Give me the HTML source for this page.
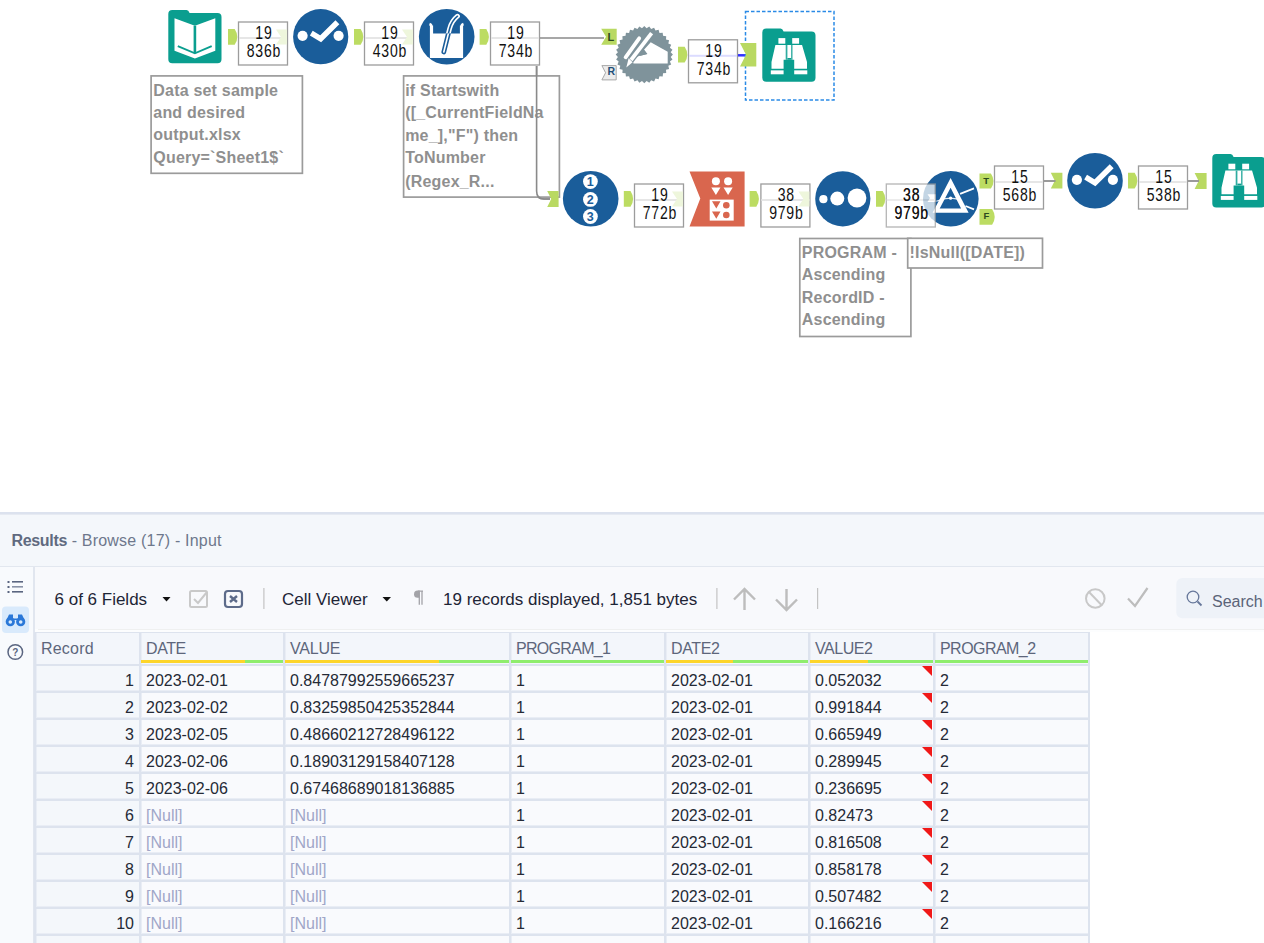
<!DOCTYPE html>
<html><head><meta charset="utf-8"><style>
*{margin:0;padding:0;box-sizing:border-box}
html,body{width:1264px;height:943px;overflow:hidden;background:#fff;font-family:"Liberation Sans", sans-serif}
.cv{position:absolute;left:0;top:0}
.cb{font-family:"Liberation Sans",sans-serif;font-size:18px;fill:#111;letter-spacing:1px}
.an{font-family:"Liberation Sans",sans-serif;font-size:16px;font-weight:bold;fill:#8f8f8f;letter-spacing:0.2px}
.anc{font-family:"Liberation Sans",sans-serif;font-size:9px;font-weight:bold;fill:#3d6b2a}
.rid{font-family:"Liberation Sans",sans-serif;font-size:10px;font-weight:bold;fill:#1a5d9a}
.abs{position:absolute}
.hc{position:absolute;top:633px;height:31px;background:#f3f6fb;box-shadow:inset 1px 0 0 #e9edf5}
.ht{position:absolute;top:638.5px;font-size:16px;line-height:20px;color:#5d667b;white-space:nowrap}
.bar{position:absolute;top:660px;height:3px}
.dc{position:absolute;height:25px;box-shadow:inset 1px -1px 0 #e9edf5}
.dt{position:absolute;font-size:16px;line-height:25px;height:25px;padding-top:2px;color:#252a36;white-space:nowrap}
.nul{color:#a0a6c8}
.red{position:absolute;width:10px;height:10px;background:#f01818;clip-path:polygon(0 0,100% 0,100% 100%)}
.tb{position:absolute;white-space:nowrap;font-size:17px;line-height:20px;color:#1e2536}
</style></head><body>
<svg class="cv" width="1264" height="512" viewBox="0 0 1264 512"><g transform="translate(168,9.5)"><path d="M0.3 4.4 Q0.3 0.4 4.3 0.4 H18.5 Q20.5 0.4 21.6 3.4 H49.5 Q53.5 3.4 53.5 7.4 V49.7 Q53.5 53.7 49.5 53.7 H4.3 Q0.3 53.7 0.3 49.7 Z" fill="#0a9e8f"/><path d="M6.5 8.7 L26.9 16.2 L47.3 8.7 V41.2 L26.9 49.1 L6.5 41.2 Z" fill="#fff"/><path d="M26.9 16.2 V43.8" stroke="#0a9e8f" stroke-width="2.6"/><path d="M9.8 36.6 L26.9 43.8 L43.7 36.6" stroke="#0a9e8f" stroke-width="1.9" fill="none"/></g><path d="M228 29 H234.70 Q239.90 36.90 234.70 44.8 H228 Z" fill="#bcdc62"/><g transform="translate(238,21.5)"><rect x="0.5" y="0.5" width="49" height="43" fill="#fff" stroke="#9c9c9c" stroke-width="1.3"/><rect x="1" y="15.5" width="48" height="2" fill="#e6e6e6"/><path d="M38 8 L49 8 L49 23 L38 23 L43 15.5 Z" fill="#eef6dc"/><text transform="translate(25.9,17.3) scale(0.78,1)" text-anchor="middle" class="cb">19</text><text transform="translate(25.9,35.7) scale(0.78,1)" text-anchor="middle" class="cb">836b</text></g><circle cx="320.7" cy="36.7" r="27.6" fill="#1a5d9a"/><circle cx="302.6" cy="35.8" r="5.1" fill="#fff"/><circle cx="338.6" cy="35.8" r="5.1" fill="#fff"/><path d="M311.3 33.2 L320.7 38.8 L337.4 22.3" stroke="#fff" stroke-width="5.5" fill="none" stroke-linecap="butt" stroke-linejoin="miter"/><path d="M354 29 H360.70 Q365.90 36.90 360.70 44.8 H354 Z" fill="#bcdc62"/><g transform="translate(364,21.5)"><rect x="0.5" y="0.5" width="49" height="43" fill="#fff" stroke="#9c9c9c" stroke-width="1.3"/><rect x="1" y="15.5" width="48" height="2" fill="#e6e6e6"/><path d="M38 8 L49 8 L49 23 L38 23 L43 15.5 Z" fill="#eef6dc"/><text transform="translate(25.9,17.3) scale(0.78,1)" text-anchor="middle" class="cb">19</text><text transform="translate(25.9,35.7) scale(0.78,1)" text-anchor="middle" class="cb">430b</text></g><circle cx="446.7" cy="36.7" r="27.8" fill="#1a5d9a"/><path d="M431.5 25.5 V56.3 H461.5 V25.5" stroke="#fff" stroke-width="3.2" fill="none"/><path d="M431.5 26 Q431 24.5 429.5 24" stroke="#fff" stroke-width="2.6" fill="none"/><path d="M461.5 26 Q462 24.5 463.5 24" stroke="#fff" stroke-width="2.6" fill="none"/><rect x="431.5" y="33.5" width="30" height="22.8" fill="#fff"/><clipPath id="aw"><rect x="400" y="0" width="100" height="33.5"/></clipPath><clipPath id="bw"><rect x="400" y="33.5" width="100" height="40"/></clipPath><g clip-path="url(#aw)"><path d="M443.8 52 L449.5 29 Q451.5 21 457.5 16.2" stroke="#fff" stroke-width="4.8" fill="none" stroke-linecap="round"/><path d="M443.8 52 L449.5 29 Q451.5 21 457.5 16.2" stroke="#1a5d9a" stroke-width="1.5" fill="none" stroke-linecap="round"/></g><g clip-path="url(#bw)"><path d="M443.8 52 L449.5 29 Q451.5 21 457.5 16.2" stroke="#1a5d9a" stroke-width="4.8" fill="none" stroke-linecap="round"/><path d="M443.8 52 L449.5 29 Q451.5 21 457.5 16.2" stroke="#fff" stroke-width="1.6" fill="none" stroke-linecap="round"/></g><path d="M479.6 29 H486.30 Q491.50 36.90 486.30 44.8 H479.6 Z" fill="#bcdc62"/><g transform="translate(490,21.5)"><rect x="0.5" y="0.5" width="49" height="43" fill="#fff" stroke="#9c9c9c" stroke-width="1.3"/><rect x="1" y="15.5" width="48" height="2" fill="#e6e6e6"/><text transform="translate(25.9,17.3) scale(0.78,1)" text-anchor="middle" class="cb">19</text><text transform="translate(25.9,35.7) scale(0.78,1)" text-anchor="middle" class="cb">734b</text></g><path d="M540 38 H604" stroke="#8a8a8a" stroke-width="1.6" fill="none"/><path d="M536.6 66 V191 Q536.6 199 544 199 H550" stroke="#8a8a8a" stroke-width="1.6" fill="none"/><polygon points="644.30,26.00 646.61,28.20 649.27,26.43 651.16,29.00 654.08,27.72 655.50,30.58 658.60,29.83 659.50,32.89 662.68,32.69 663.04,35.86 666.21,36.22 666.01,39.40 669.07,40.30 668.32,43.40 671.18,44.82 669.90,47.74 672.47,49.63 670.70,52.29 672.90,54.60 670.70,56.91 672.47,59.57 669.90,61.46 671.18,64.38 668.32,65.80 669.07,68.90 666.01,69.80 666.21,72.98 663.04,73.34 662.68,76.51 659.50,76.31 658.60,79.37 655.50,78.62 654.08,81.48 651.16,80.20 649.27,82.77 646.61,81.00 644.30,83.20 641.99,81.00 639.33,82.77 637.44,80.20 634.52,81.48 633.10,78.62 630.00,79.37 629.10,76.31 625.92,76.51 625.56,73.34 622.39,72.98 622.59,69.80 619.53,68.90 620.28,65.80 617.42,64.38 618.70,61.46 616.13,59.57 617.90,56.91 615.70,54.60 617.90,52.29 616.13,49.63 618.70,47.74 617.42,44.82 620.28,43.40 619.53,40.30 622.59,39.40 622.39,36.22 625.56,35.86 625.92,32.69 629.10,32.89 630.00,29.83 633.10,30.58 634.52,27.72 637.44,29.00 639.33,26.43 641.99,28.20" fill="#7f939b"/><path d="M633.4 58.5 L639 56 L647.3 54 L644 49.8 L650.7 42.3 L667.7 51.8 V63.4 H633.4 Z" fill="#fff"/><path d="M644 49.8 L647.3 54 L639.5 56 Z" fill="#7f939b"/><path d="M631 60 L651.6 33.2" stroke="#7f939b" stroke-width="6.4" stroke-linecap="butt"/><path d="M631 60 L651.6 33.2" stroke="#fff" stroke-width="3.8" stroke-linecap="butt"/><path d="M628.6 58.3 L632.6 62.3 L626.3 67.6 Z" fill="#fff"/><path d="M625.6 57.3 L639.2 38.3" stroke="#fff" stroke-width="3.8" stroke-linecap="round"/><path d="M601.2 28.8 H616.7 V44.7 H601.2 L606.0 36.75 Z" fill="#b9d962"/><text x="607.6" y="41" class="anc" style="font-size:11px;fill:#2c4a1e">L</text><path d="M601.9 65.6 H616.2 V79.9 H601.9 L605.6 72.75 Z" fill="#ececec" stroke="#a8a8a8" stroke-width="1"/><text x="607.4" y="75.3" class="anc" style="font-size:10.5px;fill:#1f4f78">R</text><path d="M678 46.7 H684.70 Q689.90 54.60 684.70 62.5 H678 Z" fill="#bcdc62"/><g transform="translate(688,39.3)"><rect x="0.5" y="0.5" width="49" height="43" fill="#fff" stroke="#9c9c9c" stroke-width="1.3"/><rect x="1" y="15.5" width="48" height="2" fill="#dcdcff"/><text transform="translate(25.9,17.3) scale(0.78,1)" text-anchor="middle" class="cb">19</text><text transform="translate(25.9,35.7) scale(0.78,1)" text-anchor="middle" class="cb">734b</text></g><path d="M738 55.3 H745" stroke="#3333ff" stroke-width="2.5"/><rect x="745.5" y="11.5" width="88.5" height="88.5" fill="none" stroke="#2a8ae6" stroke-width="1.5" stroke-dasharray="3.5 2"/><path d="M740 43 H756.3 V66.5 H740 L746 54.75 Z" fill="#b9d962"/><g transform="translate(762,28.1)"><path d="M0.3 4.4 Q0.3 0.4 4.3 0.4 H18.5 Q20.5 0.4 21.6 3.4 H49.5 Q53.5 3.4 53.5 7.4 V49.7 Q53.5 53.7 49.5 53.7 H4.3 Q0.3 53.7 0.3 49.7 Z" fill="#0a9e8f"/><rect x="16.4" y="10" width="6.9" height="5.6" fill="#fff"/><rect x="30.2" y="10" width="6.9" height="5.6" fill="#fff"/><path d="M13.4 16.9 H40.05 L45 34 V40.6 H32.2 V31.7 H21.6 V40.6 H9.5 V34 Z" fill="#fff"/><rect x="23.7" y="16.9" width="1.7" height="14.8" fill="#0a9e8f" opacity="0.85"/><rect x="29.1" y="16.9" width="1.4" height="14.8" fill="#0a9e8f" opacity="0.85"/><rect x="25.4" y="29.9" width="3.7" height="1.8" fill="#0a9e8f"/><rect x="8.8" y="42.25" width="12.8" height="3.95" fill="#fff"/><rect x="32.2" y="42.25" width="13.1" height="3.95" fill="#fff"/></g><rect x="151.1" y="75.9" width="151.3" height="97.4" fill="#fff" stroke="#9b9b9b" stroke-width="1.7"/><text x="153.3" y="95.6" class="an">Data set sample</text><text x="153.3" y="117.9" class="an">and desired</text><text x="153.3" y="140.2" class="an">output.xlsx</text><text x="153.3" y="162.5" class="an">Query=`Sheet1$`</text><rect x="403.6" y="75.9" width="155.8" height="121.2" fill="#fff" stroke="#9b9b9b" stroke-width="1.7"/><text x="405.2" y="96.0" class="an">if Startswith</text><text x="405.2" y="118.3" class="an">([_CurrentFieldNa</text><text x="405.2" y="140.6" class="an">me_],"F") then</text><text x="405.2" y="162.9" class="an">ToNumber</text><text x="405.2" y="187.0" class="an">(Regex_R...</text><path d="M536.6 66 V191 Q536.6 199 544 199 H550" stroke="#8a8a8a" stroke-width="1.6" fill="none"/><path d="M547.2 191 H558.6 V207 H547.2 L551.2 199.0 Z" fill="#b9d962"/><circle cx="590.7" cy="198.7" r="27.8" fill="#1a5d9a"/><circle cx="590.4" cy="181.6" r="7.4" fill="#fff"/><text x="590.3" y="186.1" text-anchor="middle" class="rid" style="font-size:12.5px">1</text><circle cx="590.4" cy="199.4" r="7.4" fill="#fff"/><text x="590.3" y="203.9" text-anchor="middle" class="rid" style="font-size:12.5px">2</text><circle cx="590.4" cy="216.5" r="7.4" fill="#fff"/><text x="590.3" y="221.0" text-anchor="middle" class="rid" style="font-size:12.5px">3</text><path d="M623.8 191 H630.50 Q635.70 198.90 630.50 206.8 H623.8 Z" fill="#bcdc62"/><g transform="translate(634,183.5)"><rect x="0.5" y="0.5" width="49" height="43" fill="#fff" stroke="#9c9c9c" stroke-width="1.3"/><rect x="1" y="15.5" width="48" height="2" fill="#e6e6e6"/><path d="M38 8 L49 8 L49 23 L38 23 L43 15.5 Z" fill="#eef6dc"/><text transform="translate(25.9,17.3) scale(0.78,1)" text-anchor="middle" class="cb">19</text><text transform="translate(25.9,35.7) scale(0.78,1)" text-anchor="middle" class="cb">772b</text></g><path d="M689.5 171.4 H744.6 V226.5 H689.5 L700.3 198.6 Z" fill="#d9664e"/><circle cx="715.9" cy="181.2" r="4" fill="#fff"/><circle cx="728.1" cy="181.2" r="4" fill="#fff"/><path d="M711.3 187.4 H720.5 L715.9 195 Z M723.5 187.4 H732.7 L728.1 195 Z" fill="#fff"/><rect x="709.7" y="199.6" width="24" height="21" fill="#fff"/><path d="M712 201.2 H720.5 L716.3 208.5 Z M712 211.4 H720.5 L716.3 218.7 Z" fill="#d9664e"/><circle cx="726.3" cy="205.2" r="3.3" fill="#d9664e"/><circle cx="726.3" cy="215" r="3.3" fill="#d9664e"/><path d="M749.6 191 H756.30 Q761.50 198.90 756.30 206.8 H749.6 Z" fill="#bcdc62"/><g transform="translate(760.4,183.5)"><rect x="0.5" y="0.5" width="49" height="43" fill="#fff" stroke="#9c9c9c" stroke-width="1.3"/><rect x="1" y="15.5" width="48" height="2" fill="#e6e6e6"/><path d="M38 8 L49 8 L49 23 L38 23 L43 15.5 Z" fill="#eef6dc"/><text transform="translate(25.9,17.3) scale(0.78,1)" text-anchor="middle" class="cb">38</text><text transform="translate(25.9,35.7) scale(0.78,1)" text-anchor="middle" class="cb">979b</text></g><circle cx="842.8" cy="198.8" r="27.6" fill="#1a5d9a"/><circle cx="823.4" cy="199.2" r="4.1" fill="#fff"/><circle cx="837.3" cy="198.6" r="7" fill="#fff"/><circle cx="857" cy="198" r="9.4" fill="#fff"/><path d="M876 191 H882.70 Q887.90 198.90 882.70 206.8 H876 Z" fill="#bcdc62"/><circle cx="950.8" cy="198.7" r="27.8" fill="#1a5d9a"/><path d="M950.6 177.9 L968.6 212.8 H932.6 Z M950.6 187.7 L939.7 208.4 H961.1 Z" fill="#fff" fill-rule="evenodd"/><path d="M936.3 201.3 Q944 198.2 950.6 198.2 Q957 198.5 962 201" stroke="#fff" stroke-width="1.2" fill="none" opacity="0.85"/><circle cx="950.6" cy="198.2" r="1.6" fill="#fff"/><path d="M960.1 193.8 L974 188.4 M965.5 206 L974 209.4" stroke="#fff" stroke-width="1.8" fill="none"/><path d="M927.5 194.2 H935.7 V202 H927.5 L930 198.1 Z" fill="#fff"/><g opacity="0.74"><g transform="translate(885.8,183.5)"><rect x="0.5" y="0.5" width="49" height="43" fill="#fff" stroke="#9c9c9c" stroke-width="1.3"/><rect x="1" y="15.5" width="48" height="2" fill="#e6e6e6"/><text transform="translate(25.9,17.3) scale(0.78,1)" text-anchor="middle" class="cb">38</text><text transform="translate(25.9,35.7) scale(0.78,1)" text-anchor="middle" class="cb">979b</text></g></g><text transform="translate(911.7,200.8) scale(0.78,1)" text-anchor="middle" class="cb">38</text><text transform="translate(911.7,219.2) scale(0.78,1)" text-anchor="middle" class="cb">979b</text><path d="M979.5 173.4 H990.90 Q996.10 181.00 990.90 188.6 H979.5 Z" fill="#bcdc62"/><text x="983.2" y="184.3" class="anc" style="font-size:9.5px;fill:#2c4a1e">T</text><path d="M979.5 208.9 H992.10 Q997.30 216.80 992.10 224.70000000000002 H979.5 Z" fill="#bcdc62"/><text x="983.5" y="218.8" class="anc" style="font-size:9.5px;fill:#2c4a1e">F</text><g transform="translate(994,165.5)"><rect x="0.5" y="0.5" width="49" height="43" fill="#fff" stroke="#9c9c9c" stroke-width="1.3"/><rect x="1" y="15.5" width="48" height="2" fill="#e6e6e6"/><text transform="translate(25.9,17.3) scale(0.78,1)" text-anchor="middle" class="cb">15</text><text transform="translate(25.9,35.7) scale(0.78,1)" text-anchor="middle" class="cb">568b</text></g><path d="M1050.8 172.8 H1062.3999999999999 V188.60000000000002 H1050.8 L1054.8 180.70000000000002 Z" fill="#b9d962"/><path d="M1044 181 H1055.5" stroke="#8f8f8f" stroke-width="1.8"/><circle cx="1095" cy="180.7" r="27.8" fill="#1a5d9a"/><circle cx="1076.9" cy="179.8" r="5.1" fill="#fff"/><circle cx="1112.9" cy="179.8" r="5.1" fill="#fff"/><path d="M1085.6 177.2 L1095 182.8 L1111.7 166.3" stroke="#fff" stroke-width="5.5" fill="none"/><path d="M1128 172.8 H1134.70 Q1139.90 180.70 1134.70 188.60000000000002 H1128 Z" fill="#bcdc62"/><g transform="translate(1138,165.5)"><rect x="0.5" y="0.5" width="49" height="43" fill="#fff" stroke="#9c9c9c" stroke-width="1.3"/><rect x="1" y="15.5" width="48" height="2" fill="#e6e6e6"/><text transform="translate(25.9,17.3) scale(0.78,1)" text-anchor="middle" class="cb">15</text><text transform="translate(25.9,35.7) scale(0.78,1)" text-anchor="middle" class="cb">538b</text></g><path d="M1194.6 173 H1206.6 V189 H1194.6 L1198.6 181.0 Z" fill="#b9d962"/><path d="M1188 181 H1199" stroke="#8f8f8f" stroke-width="1.8"/><g transform="translate(1212,153.7)"><path d="M0.3 4.4 Q0.3 0.4 4.3 0.4 H18.5 Q20.5 0.4 21.6 3.4 H49.5 Q53.5 3.4 53.5 7.4 V49.7 Q53.5 53.7 49.5 53.7 H4.3 Q0.3 53.7 0.3 49.7 Z" fill="#0a9e8f"/><rect x="16.4" y="10" width="6.9" height="5.6" fill="#fff"/><rect x="30.2" y="10" width="6.9" height="5.6" fill="#fff"/><path d="M13.4 16.9 H40.05 L45 34 V40.6 H32.2 V31.7 H21.6 V40.6 H9.5 V34 Z" fill="#fff"/><rect x="23.7" y="16.9" width="1.7" height="14.8" fill="#0a9e8f" opacity="0.85"/><rect x="29.1" y="16.9" width="1.4" height="14.8" fill="#0a9e8f" opacity="0.85"/><rect x="25.4" y="29.9" width="3.7" height="1.8" fill="#0a9e8f"/><rect x="8.8" y="42.25" width="12.8" height="3.95" fill="#fff"/><rect x="32.2" y="42.25" width="13.1" height="3.95" fill="#fff"/></g><rect x="799.8" y="238.5" width="111.1" height="98.0" fill="#fff" stroke="#9b9b9b" stroke-width="1.7"/><text x="801.8" y="257.9" class="an">PROGRAM -</text><text x="801.8" y="280.2" class="an">Ascending</text><text x="801.8" y="302.5" class="an">RecordID -</text><text x="801.8" y="324.8" class="an">Ascending</text><rect x="907.7" y="238.3" width="134.8" height="29.7" fill="#fff" stroke="#9b9b9b" stroke-width="1.7"/><text x="909.5" y="257.9" class="an">!IsNull([DATE])</text></svg>
<div class="abs" style="left:0;top:512px;width:1264px;height:2px;background:#dce2ee"></div><div class="abs" style="left:0;top:514px;width:1264px;height:1px;background:#e6eaf2"></div>
<div class="abs" style="left:0;top:515px;width:1264px;height:51px;background:#f4f7fb"></div>
<div class="abs" style="left:11.5px;top:531px;font-size:16px;line-height:20px;white-space:nowrap"><b style="color:#606a80;letter-spacing:-0.33px">Results</b><span style="color:#6e778c;letter-spacing:0.2px"> - Browse (17) - Input</span></div>
<div class="abs" style="left:0;top:566px;width:1264px;height:1px;background:#e2e7ef"></div>
<div class="abs" style="left:0;top:567px;width:33px;height:376px;background:#f8fafd"></div>
<div class="abs" style="left:33px;top:567px;width:2px;height:376px;background:#e1e6ef"></div>
<div class="abs" style="left:35px;top:567px;width:1229px;height:62px;background:#f8f9fc"></div>
<div class="abs" style="left:35px;top:629px;width:1229px;height:3px;background:#fcfdfe"></div><div class="abs" style="left:38px;top:629px;width:1226px;height:1px;background:#eff0f0"></div>
<div class="abs" style="left:35px;top:632px;width:1229px;height:311px;background:#fff"></div>
<!-- sidebar icons -->
<svg class="abs" style="left:0;top:567px" width="33" height="120">
 <g fill="#5a6580"><rect x="7.5" y="14" width="2" height="2"/><rect x="7.5" y="19" width="2" height="2"/><rect x="7.5" y="24" width="2" height="2"/>
 <rect x="12" y="14" width="11" height="1.6"/><rect x="12" y="19" width="11" height="1.6" fill="#8a93a8"/><rect x="12" y="24" width="11" height="1.6"/></g>
 <rect x="2" y="39.5" width="27" height="26.5" rx="4" fill="#d9eafc"/>
 <circle cx="10.3" cy="54.7" r="4.6" fill="#2b78d8"/><circle cx="20.7" cy="54.7" r="4.6" fill="#2b78d8"/>
 <circle cx="10.3" cy="55" r="1.8" fill="#d9eafc"/><circle cx="20.7" cy="55" r="1.8" fill="#d9eafc"/>
 <path d="M6.5 53 L9 47.5 H13 V51.5 H18 V47.5 H22 L24.5 53 Z" fill="#2b78d8"/>
 <circle cx="15.3" cy="85" r="7.3" fill="none" stroke="#5a6580" stroke-width="1.5"/>
 <text x="15.3" y="89" text-anchor="middle" font-size="10" font-weight="bold" fill="#5a6580" font-family="Liberation Sans">?</text>
</svg>
<div class="tb" style="left:54.5px;top:590px">6 of 6 Fields</div>
<svg class="abs" style="left:150px;top:580px" width="700" height="40">
 <path d="M12.5 17 H20.5 L16.5 21.5 Z" fill="#111"/>
 <rect x="40" y="11" width="17" height="16" rx="1.5" fill="none" stroke="#c9c9c9" stroke-width="2"/>
 <path d="M44 19 L48 23 L57 12" stroke="#c9c9c9" stroke-width="2" fill="none"/>
 <rect x="75" y="11" width="17" height="16" rx="3" fill="none" stroke="#5d6b8a" stroke-width="2.2"/>
 <path d="M80 16 L87 22 M87 16 L80 22" stroke="#5d6b8a" stroke-width="2.4"/>
 <rect x="113.3" y="8" width="1.2" height="21" fill="#c3c3c3"/>
 <path d="M232.5 17 H241 L236.75 21.5 Z" fill="#111"/>
 <path d="M269.8 10.6 H267.5 Q264 10.6 264 14.2 Q264 17.8 267.5 17.8 H269.8 Z" fill="#a3a3a8"/>
 <path d="M269.3 10.6 V24.7 M272 10.6 V24.7 M268 11.1 H273" stroke="#a3a3a8" stroke-width="1.3" fill="none"/>
 <rect x="566.3" y="8" width="1.2" height="21" fill="#c3c3c3"/>
 <path d="M594.5 9 V30 M584 19.5 L594.5 9 L605 19.5" stroke="#bdbdbd" stroke-width="2.4" fill="none"/>
 <path d="M636.5 9 V30 M626 19.5 L636.5 30 L647 19.5" stroke="#bdbdbd" stroke-width="2.4" fill="none"/>
 <rect x="667" y="8" width="1.2" height="21" fill="#c3c3c3"/>
</svg>
<div class="tb" style="left:282px;top:590px">Cell Viewer</div>
<div class="tb" style="left:443px;top:590px">19 records displayed, 1,851 bytes</div>
<svg class="abs" style="left:1080px;top:580px;overflow:visible" width="184" height="45">
 <circle cx="15.3" cy="18.5" r="9.3" fill="none" stroke="#c8c8c8" stroke-width="2"/>
 <path d="M9 12 L21.5 25" stroke="#c8c8c8" stroke-width="2"/>
 <path d="M48 18.5 L55 26 L67.5 8" stroke="#bdbdbd" stroke-width="2.2" fill="none"/>
 <rect x="96.3" y="-2.1" width="100" height="40.4" rx="6" fill="#eef2f8"/>
 <circle cx="113" cy="17" r="5.8" fill="none" stroke="#66779a" stroke-width="1.3"/>
 <path d="M117.5 21.5 L121.5 25.5" stroke="#66779a" stroke-width="1.8"/>
</svg>
<div class="tb" style="left:1212px;top:592px;color:#5b6479;font-size:16px">Search</div>
<div style="position:absolute;left:34px;top:632px;width:1056px;height:311px;background:#dde3ee"></div><div class="hc" style="left:36px;width:103px"></div><div class="ht" style="left:41px;letter-spacing:0.2px">Record</div><div class="hc" style="left:141px;width:142px"></div><div class="ht" style="left:146px;letter-spacing:-0.4px">DATE</div><div class="bar" style="left:141px;width:104px;background:#fdd52b"></div><div class="bar" style="left:245px;width:38px;background:#8fed6d"></div><div class="hc" style="left:285px;width:224px"></div><div class="ht" style="left:290px;letter-spacing:-0.2px">VALUE</div><div class="bar" style="left:285px;width:153.5px;background:#fdd52b"></div><div class="bar" style="left:438.5px;width:70.5px;background:#8fed6d"></div><div class="hc" style="left:511px;width:153px"></div><div class="ht" style="left:516px;letter-spacing:-0.7px">PROGRAM_1</div><div class="bar" style="left:511px;width:153px;background:#8fed6d"></div><div class="hc" style="left:666px;width:142px"></div><div class="ht" style="left:671px;letter-spacing:-0.35px">DATE2</div><div class="bar" style="left:666px;width:66.60000000000002px;background:#fdd52b"></div><div class="bar" style="left:732.6px;width:75.39999999999998px;background:#8fed6d"></div><div class="hc" style="left:810px;width:123px"></div><div class="ht" style="left:815px;letter-spacing:-0.45px">VALUE2</div><div class="bar" style="left:810px;width:57.60000000000002px;background:#fdd52b"></div><div class="bar" style="left:867.6px;width:65.39999999999998px;background:#8fed6d"></div><div class="hc" style="left:935px;width:153px"></div><div class="ht" style="left:940px;letter-spacing:-0.55px">PROGRAM_2</div><div class="bar" style="left:935px;width:153px;background:#8fed6d"></div><div class="dc" style="left:36px;top:666px;width:103px;background:#f4f7fb"></div><div class="dt" style="left:36px;top:666px;width:98px;text-align:right">1</div><div class="dc" style="left:141px;top:666px;width:142px;background:#f9fafd"></div><div class="dt" style="left:146px;top:666px">2023-02-01</div><div class="dc" style="left:285px;top:666px;width:224px;background:#f9fafd"></div><div class="dt" style="left:290px;top:666px">0.84787992559665237</div><div class="dc" style="left:511px;top:666px;width:153px;background:#f9fafd"></div><div class="dt" style="left:516px;top:666px">1</div><div class="dc" style="left:666px;top:666px;width:142px;background:#f9fafd"></div><div class="dt" style="left:671px;top:666px">2023-02-01</div><div class="dc" style="left:810px;top:666px;width:123px;background:#f9fafd"></div><div class="dt" style="left:815px;top:666px">0.052032</div><div class="red" style="left:922px;top:666px"></div><div class="dc" style="left:935px;top:666px;width:153px;background:#f9fafd"></div><div class="dt" style="left:940px;top:666px">2</div><div class="dc" style="left:36px;top:693px;width:103px;background:#f4f7fb"></div><div class="dt" style="left:36px;top:693px;width:98px;text-align:right">2</div><div class="dc" style="left:141px;top:693px;width:142px;background:#f9fafd"></div><div class="dt" style="left:146px;top:693px">2023-02-02</div><div class="dc" style="left:285px;top:693px;width:224px;background:#f9fafd"></div><div class="dt" style="left:290px;top:693px">0.83259850425352844</div><div class="dc" style="left:511px;top:693px;width:153px;background:#f9fafd"></div><div class="dt" style="left:516px;top:693px">1</div><div class="dc" style="left:666px;top:693px;width:142px;background:#f9fafd"></div><div class="dt" style="left:671px;top:693px">2023-02-01</div><div class="dc" style="left:810px;top:693px;width:123px;background:#f9fafd"></div><div class="dt" style="left:815px;top:693px">0.991844</div><div class="red" style="left:922px;top:693px"></div><div class="dc" style="left:935px;top:693px;width:153px;background:#f9fafd"></div><div class="dt" style="left:940px;top:693px">2</div><div class="dc" style="left:36px;top:720px;width:103px;background:#f4f7fb"></div><div class="dt" style="left:36px;top:720px;width:98px;text-align:right">3</div><div class="dc" style="left:141px;top:720px;width:142px;background:#f9fafd"></div><div class="dt" style="left:146px;top:720px">2023-02-05</div><div class="dc" style="left:285px;top:720px;width:224px;background:#f9fafd"></div><div class="dt" style="left:290px;top:720px">0.48660212728496122</div><div class="dc" style="left:511px;top:720px;width:153px;background:#f9fafd"></div><div class="dt" style="left:516px;top:720px">1</div><div class="dc" style="left:666px;top:720px;width:142px;background:#f9fafd"></div><div class="dt" style="left:671px;top:720px">2023-02-01</div><div class="dc" style="left:810px;top:720px;width:123px;background:#f9fafd"></div><div class="dt" style="left:815px;top:720px">0.665949</div><div class="red" style="left:922px;top:720px"></div><div class="dc" style="left:935px;top:720px;width:153px;background:#f9fafd"></div><div class="dt" style="left:940px;top:720px">2</div><div class="dc" style="left:36px;top:747px;width:103px;background:#f4f7fb"></div><div class="dt" style="left:36px;top:747px;width:98px;text-align:right">4</div><div class="dc" style="left:141px;top:747px;width:142px;background:#f9fafd"></div><div class="dt" style="left:146px;top:747px">2023-02-06</div><div class="dc" style="left:285px;top:747px;width:224px;background:#f9fafd"></div><div class="dt" style="left:290px;top:747px">0.18903129158407128</div><div class="dc" style="left:511px;top:747px;width:153px;background:#f9fafd"></div><div class="dt" style="left:516px;top:747px">1</div><div class="dc" style="left:666px;top:747px;width:142px;background:#f9fafd"></div><div class="dt" style="left:671px;top:747px">2023-02-01</div><div class="dc" style="left:810px;top:747px;width:123px;background:#f9fafd"></div><div class="dt" style="left:815px;top:747px">0.289945</div><div class="red" style="left:922px;top:747px"></div><div class="dc" style="left:935px;top:747px;width:153px;background:#f9fafd"></div><div class="dt" style="left:940px;top:747px">2</div><div class="dc" style="left:36px;top:774px;width:103px;background:#f4f7fb"></div><div class="dt" style="left:36px;top:774px;width:98px;text-align:right">5</div><div class="dc" style="left:141px;top:774px;width:142px;background:#f9fafd"></div><div class="dt" style="left:146px;top:774px">2023-02-06</div><div class="dc" style="left:285px;top:774px;width:224px;background:#f9fafd"></div><div class="dt" style="left:290px;top:774px">0.67468689018136885</div><div class="dc" style="left:511px;top:774px;width:153px;background:#f9fafd"></div><div class="dt" style="left:516px;top:774px">1</div><div class="dc" style="left:666px;top:774px;width:142px;background:#f9fafd"></div><div class="dt" style="left:671px;top:774px">2023-02-01</div><div class="dc" style="left:810px;top:774px;width:123px;background:#f9fafd"></div><div class="dt" style="left:815px;top:774px">0.236695</div><div class="red" style="left:922px;top:774px"></div><div class="dc" style="left:935px;top:774px;width:153px;background:#f9fafd"></div><div class="dt" style="left:940px;top:774px">2</div><div class="dc" style="left:36px;top:801px;width:103px;background:#f4f7fb"></div><div class="dt" style="left:36px;top:801px;width:98px;text-align:right">6</div><div class="dc" style="left:141px;top:801px;width:142px;background:#f9fafd"></div><div class="dt nul" style="left:146px;top:801px">[Null]</div><div class="dc" style="left:285px;top:801px;width:224px;background:#f9fafd"></div><div class="dt nul" style="left:290px;top:801px">[Null]</div><div class="dc" style="left:511px;top:801px;width:153px;background:#f9fafd"></div><div class="dt" style="left:516px;top:801px">1</div><div class="dc" style="left:666px;top:801px;width:142px;background:#f9fafd"></div><div class="dt" style="left:671px;top:801px">2023-02-01</div><div class="dc" style="left:810px;top:801px;width:123px;background:#f9fafd"></div><div class="dt" style="left:815px;top:801px">0.82473</div><div class="red" style="left:922px;top:801px"></div><div class="dc" style="left:935px;top:801px;width:153px;background:#f9fafd"></div><div class="dt" style="left:940px;top:801px">2</div><div class="dc" style="left:36px;top:828px;width:103px;background:#f4f7fb"></div><div class="dt" style="left:36px;top:828px;width:98px;text-align:right">7</div><div class="dc" style="left:141px;top:828px;width:142px;background:#f9fafd"></div><div class="dt nul" style="left:146px;top:828px">[Null]</div><div class="dc" style="left:285px;top:828px;width:224px;background:#f9fafd"></div><div class="dt nul" style="left:290px;top:828px">[Null]</div><div class="dc" style="left:511px;top:828px;width:153px;background:#f9fafd"></div><div class="dt" style="left:516px;top:828px">1</div><div class="dc" style="left:666px;top:828px;width:142px;background:#f9fafd"></div><div class="dt" style="left:671px;top:828px">2023-02-01</div><div class="dc" style="left:810px;top:828px;width:123px;background:#f9fafd"></div><div class="dt" style="left:815px;top:828px">0.816508</div><div class="red" style="left:922px;top:828px"></div><div class="dc" style="left:935px;top:828px;width:153px;background:#f9fafd"></div><div class="dt" style="left:940px;top:828px">2</div><div class="dc" style="left:36px;top:855px;width:103px;background:#f4f7fb"></div><div class="dt" style="left:36px;top:855px;width:98px;text-align:right">8</div><div class="dc" style="left:141px;top:855px;width:142px;background:#f9fafd"></div><div class="dt nul" style="left:146px;top:855px">[Null]</div><div class="dc" style="left:285px;top:855px;width:224px;background:#f9fafd"></div><div class="dt nul" style="left:290px;top:855px">[Null]</div><div class="dc" style="left:511px;top:855px;width:153px;background:#f9fafd"></div><div class="dt" style="left:516px;top:855px">1</div><div class="dc" style="left:666px;top:855px;width:142px;background:#f9fafd"></div><div class="dt" style="left:671px;top:855px">2023-02-01</div><div class="dc" style="left:810px;top:855px;width:123px;background:#f9fafd"></div><div class="dt" style="left:815px;top:855px">0.858178</div><div class="red" style="left:922px;top:855px"></div><div class="dc" style="left:935px;top:855px;width:153px;background:#f9fafd"></div><div class="dt" style="left:940px;top:855px">2</div><div class="dc" style="left:36px;top:882px;width:103px;background:#f4f7fb"></div><div class="dt" style="left:36px;top:882px;width:98px;text-align:right">9</div><div class="dc" style="left:141px;top:882px;width:142px;background:#f9fafd"></div><div class="dt nul" style="left:146px;top:882px">[Null]</div><div class="dc" style="left:285px;top:882px;width:224px;background:#f9fafd"></div><div class="dt nul" style="left:290px;top:882px">[Null]</div><div class="dc" style="left:511px;top:882px;width:153px;background:#f9fafd"></div><div class="dt" style="left:516px;top:882px">1</div><div class="dc" style="left:666px;top:882px;width:142px;background:#f9fafd"></div><div class="dt" style="left:671px;top:882px">2023-02-01</div><div class="dc" style="left:810px;top:882px;width:123px;background:#f9fafd"></div><div class="dt" style="left:815px;top:882px">0.507482</div><div class="red" style="left:922px;top:882px"></div><div class="dc" style="left:935px;top:882px;width:153px;background:#f9fafd"></div><div class="dt" style="left:940px;top:882px">2</div><div class="dc" style="left:36px;top:909px;width:103px;background:#f4f7fb"></div><div class="dt" style="left:36px;top:909px;width:98px;text-align:right">10</div><div class="dc" style="left:141px;top:909px;width:142px;background:#f9fafd"></div><div class="dt nul" style="left:146px;top:909px">[Null]</div><div class="dc" style="left:285px;top:909px;width:224px;background:#f9fafd"></div><div class="dt nul" style="left:290px;top:909px">[Null]</div><div class="dc" style="left:511px;top:909px;width:153px;background:#f9fafd"></div><div class="dt" style="left:516px;top:909px">1</div><div class="dc" style="left:666px;top:909px;width:142px;background:#f9fafd"></div><div class="dt" style="left:671px;top:909px">2023-02-01</div><div class="dc" style="left:810px;top:909px;width:123px;background:#f9fafd"></div><div class="dt" style="left:815px;top:909px">0.166216</div><div class="red" style="left:922px;top:909px"></div><div class="dc" style="left:935px;top:909px;width:153px;background:#f9fafd"></div><div class="dt" style="left:940px;top:909px">2</div><div class="dc" style="left:36px;top:936px;width:103px;background:#f4f7fb"></div><div class="dc" style="left:141px;top:936px;width:142px;background:#f9fafd"></div><div class="dc" style="left:285px;top:936px;width:224px;background:#f9fafd"></div><div class="dc" style="left:511px;top:936px;width:153px;background:#f9fafd"></div><div class="dc" style="left:666px;top:936px;width:142px;background:#f9fafd"></div><div class="dc" style="left:810px;top:936px;width:123px;background:#f9fafd"></div><div class="dc" style="left:935px;top:936px;width:153px;background:#f9fafd"></div>
</body></html>
